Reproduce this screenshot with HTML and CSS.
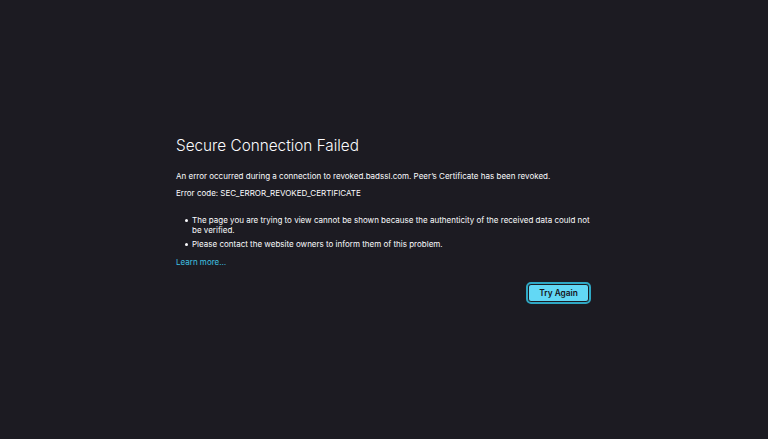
FILE: index.html
```html
<!DOCTYPE html>
<html lang="en">
<head>
<meta charset="utf-8">
<title>Problem loading page</title>
<link rel="stylesheet" href="styles.css">
</head>
<body>
<main class="container">
  <h1 class="title">Secure Connection Failed</h1>
  <p class="desc">An error occurred during a connection to revoked.badssl.com. Peer’s Certificate has been revoked.</p>
  <p class="code">Error code: SEC_ERROR_REVOKED_CERTIFICATE</p>
  <ul class="list">
    <li><span>The page you are trying to view cannot be shown because the authenticity of the received data could not be verified.</span></li>
    <li><span>Please contact the website owners to inform them of this problem.</span></li>
  </ul>
  <a class="learn" href="#">Learn more…</a>
  <div class="actions">
    <button class="btn">Try Again</button>
  </div>
</main>
</body>
</html>
```
FILE: styles.css
```css
html, body {
  margin: 0;
  height: 100%;
}
body {
  background: #1c1b22;
  color: #fbfbfe;
  font-family: Inter, "Liberation Sans", sans-serif;
  display: flex;
  align-items: flex-start;
  justify-content: center;
}
.container {
  width: 416px;
  margin-top: 137px;
}
.title {
  font-size: 15.3px;
  font-weight: 300;
  margin: 0 0 15px;
  line-height: 18px;
}
.desc, .code {
  font-size: 8px;
  margin: 0;
  line-height: 12px;
}
.desc { margin-bottom: 5px; }
.code { margin-bottom: 16px; }
.list {
  margin: 0;
  padding-left: 9px;
  list-style: none;
  font-size: 8px;
  line-height: 10px;
}
.list li {
  display: flex;
  margin-bottom: 4px;
}
.list li::before {
  content: "";
  flex: none;
  width: 3px;
  height: 3px;
  border-radius: 50%;
  background: #fbfbfe;
  margin: 3.5px 4px 0 0;
}
.list li:last-child {
  margin-bottom: 0;
}
.learn {
  display: inline-block;
  margin-top: 6px;
  font-size: 8px;
  line-height: 12px;
  color: #3fc2e2;
  text-decoration: none;
}
.actions {
  display: flex;
  justify-content: flex-end;
  margin-top: 13px;
}
.btn {
  font-family: inherit;
  font-size: 8.3px;
  font-weight: 600;
  color: #15141a;
  background: #62d8f5;
  border: 1px solid #1c1b22;
  border-radius: 3px;
  width: 61px;
  height: 18px;
  padding: 0;
  outline: 2px solid #2fa8c4;
  outline-offset: 0;
  margin: 2px 3px 0 0;
}
```
